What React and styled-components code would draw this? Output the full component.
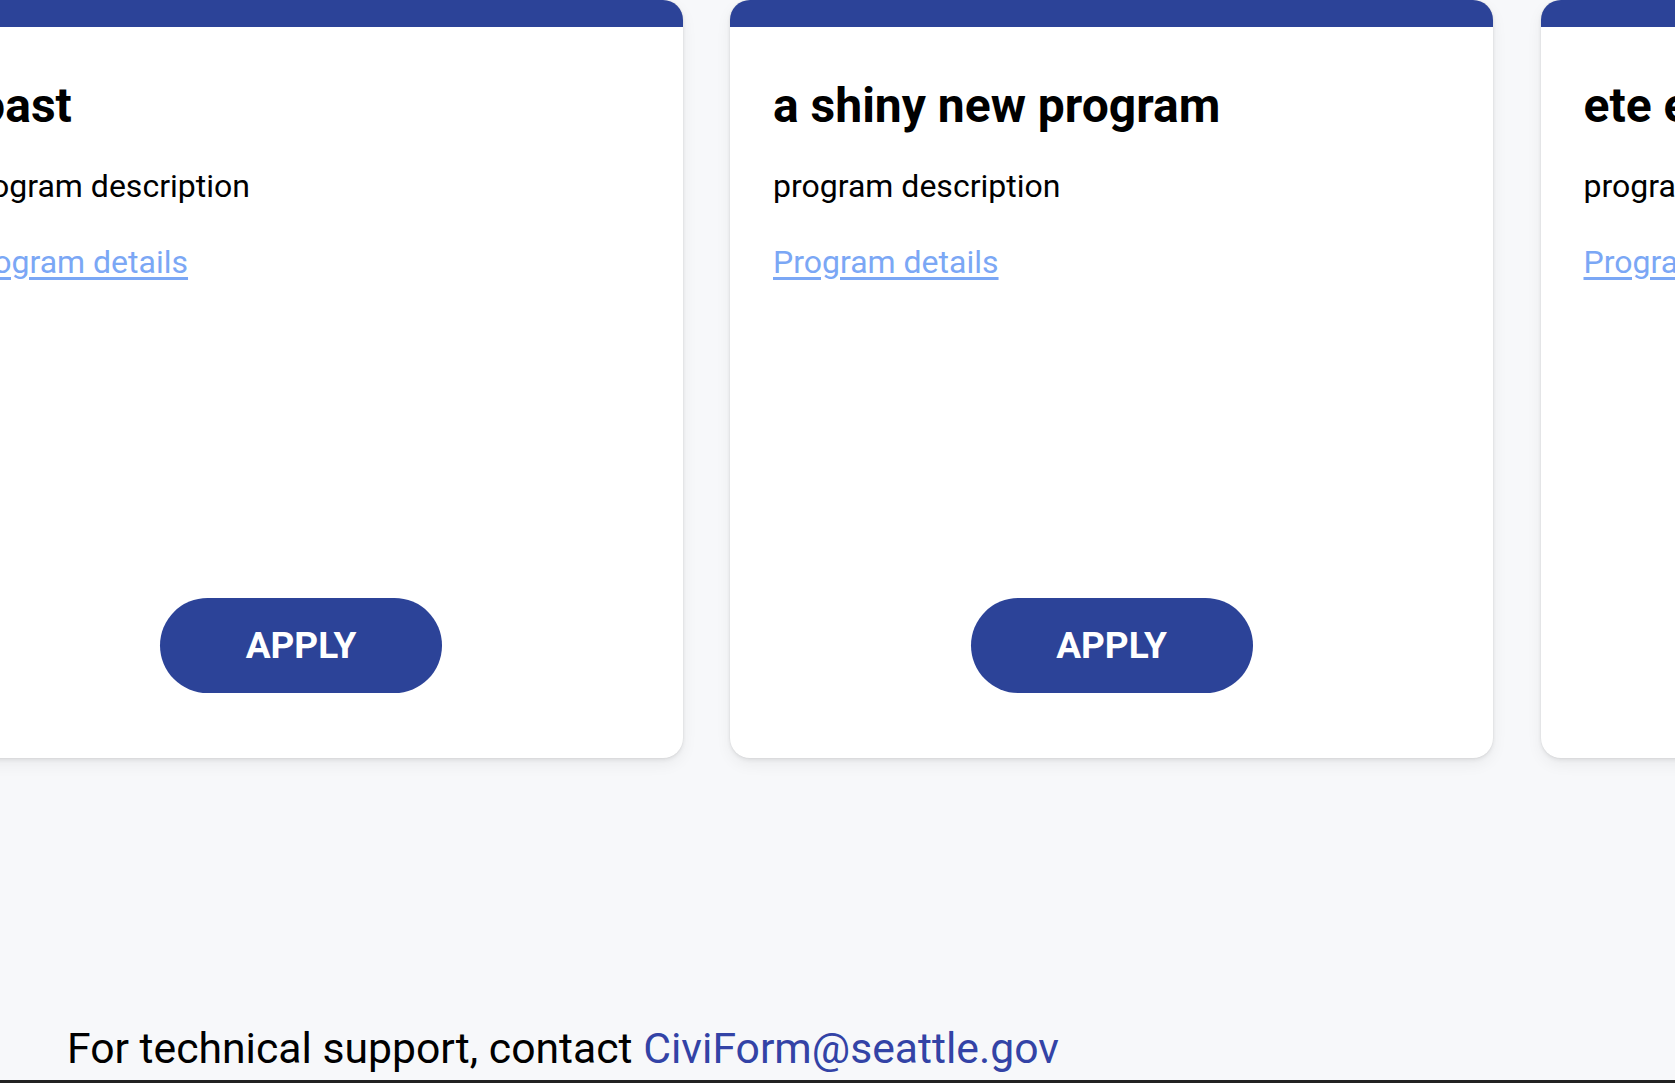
import React from 'react'
import styled, { createGlobalStyle } from 'styled-components'

const GlobalStyle = createGlobalStyle`
  html, body {
    margin: 0;
    padding: 0;
  }
  body {
    background: #f7f8fa;
    font-family: Roboto, 'Liberation Sans', sans-serif;
    color: #000;
  }
`

const programs = [
  { id: 1, title: 'toast', description: 'program description' },
  { id: 2, title: 'a shiny new program', description: 'program description' },
  { id: 3, title: 'ete everything', description: 'program description' },
]

const App = () => {
  return (
    <Page>
      <GlobalStyle />
      <Carousel>
        <Track>
          {programs.map(program => (
            <Card key={program.id}>
              <Title>{program.title}</Title>
              <Description>{program.description}</Description>
              <DetailsLink href="#">Program details</DetailsLink>
              <ApplyButton>APPLY</ApplyButton>
            </Card>
          ))}
        </Track>
      </Carousel>
      <Footer>
        <SupportText>
          For technical support, contact <EmailLink href="#">CiviForm@seattle.gov</EmailLink>
        </SupportText>
      </Footer>
      <BottomBar />
    </Page>
  )
}

const Page = styled.div`
  display: flex;
  flex-direction: column;
  height: 1083px;
  overflow: hidden;
  background: #f7f8fa;
`

const Carousel = styled.div`
  overflow: hidden;
  padding-bottom: 24px;
`

const Track = styled.div`
  display: flex;
  gap: 47.5px;
  margin-left: -80.5px;
`

const Card = styled.div`
  flex: 0 0 763px;
  height: 758px;
  box-sizing: border-box;
  display: flex;
  flex-direction: column;
  align-items: flex-start;
  padding: 0 43px;
  background: #ffffff;
  border-top: 27px solid #2c4398;
  border-radius: 20px;
  box-shadow: 0 0 2px rgba(0, 0, 0, 0.08), 0 2px 4px rgba(0, 0, 0, 0.07), 0 6px 16px rgba(0, 0, 0, 0.06);
`

const Title = styled.h2`
  margin: 50px 0 0;
  font-size: 48px;
  line-height: 57.6px;
  font-weight: 700;
  white-space: nowrap;
`

const Description = styled.p`
  margin: 27px 0 0;
  font-size: 32px;
  line-height: 48px;
  white-space: nowrap;
`

const DetailsLink = styled.a`
  margin-top: 28px;
  font-size: 32px;
  line-height: 48px;
  color: #7ba7f5;
  text-decoration: underline;
  text-underline-offset: 4px;
  white-space: nowrap;
`

const ApplyButton = styled.button`
  align-self: center;
  margin-top: auto;
  margin-bottom: 65px;
  width: 282px;
  height: 95px;
  border: none;
  border-radius: 48px;
  background: #2c4398;
  color: #ffffff;
  font-family: Roboto, 'Liberation Sans', sans-serif;
  font-size: 37px;
  font-weight: 700;
  cursor: pointer;
`

const Footer = styled.footer`
  margin-top: auto;
  padding: 0 0 6px 67px;
`

const SupportText = styled.p`
  margin: 0;
  font-size: 42.7px;
  line-height: 51px;
  white-space: nowrap;
`

const EmailLink = styled.a`
  color: #3343a6;
  text-decoration: none;
`

const BottomBar = styled.div`
  height: 3px;
  background: #222222;
`

export default App
